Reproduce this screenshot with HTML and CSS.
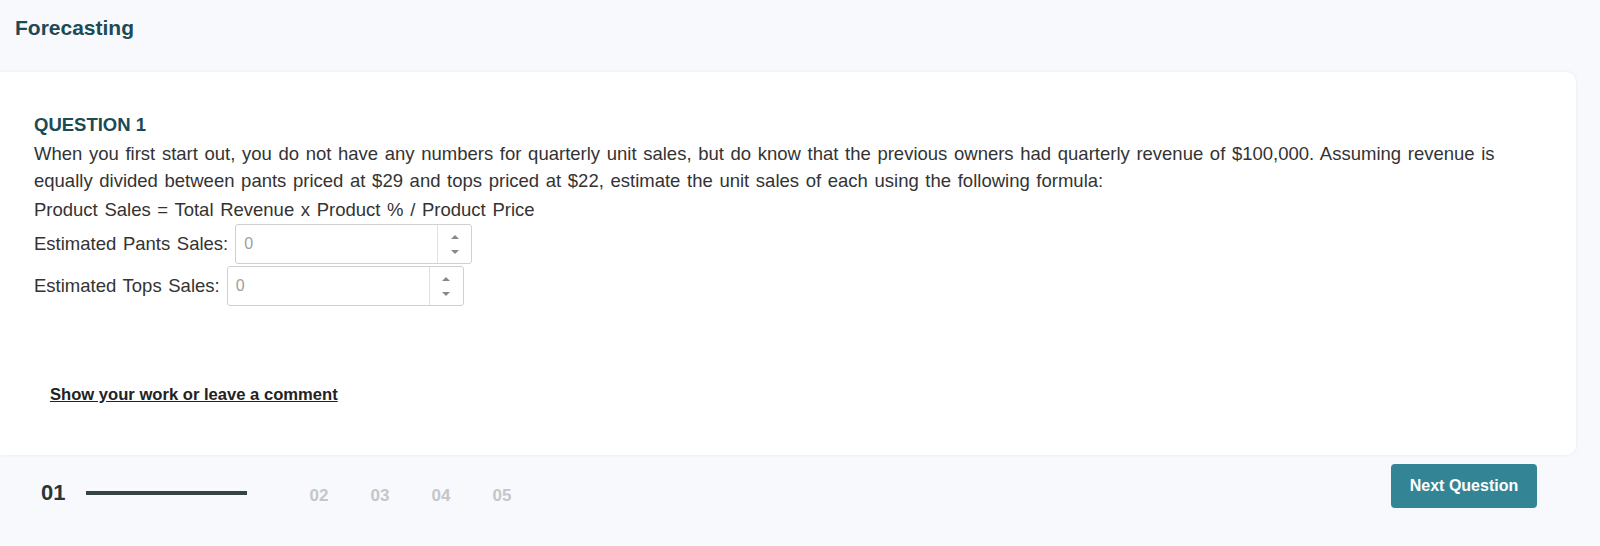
FILE: index.html
```html
<!DOCTYPE html>
<html>
<head>
<meta charset="utf-8">
<link rel="stylesheet" href="styles.css">
</head>
<body>
<header class="page-head">
  <h1 class="page-title">Forecasting</h1>
</header>
<main class="card">
  <h2 class="q-label">QUESTION 1</h2>
  <p class="q-text">When you first start out, you do not have any numbers for quarterly unit sales, but do know that the previous owners had quarterly revenue of $100,000. Assuming revenue is equally divided between pants priced at $29 and tops priced at $22, estimate the unit sales of each using the following formula:</p>
  <p class="q-formula">Product Sales = Total Revenue x Product % / Product Price</p>
  <div class="field">
    <label class="field-label">Estimated Pants Sales:</label>
    <div class="num-input"><span class="num-value">0</span><span class="spin"><span class="up"></span><span class="down"></span></span></div>
  </div>
  <div class="field">
    <label class="field-label">Estimated Tops Sales:</label>
    <div class="num-input"><span class="num-value">0</span><span class="spin"><span class="up"></span><span class="down"></span></span></div>
  </div>
  <a class="comment-link" href="#">Show your work or leave a comment</a>
</main>
<footer class="foot">
  <div class="steps">
    <span class="step current">01</span>
    <span class="progress"></span>
    <span class="step">02</span>
    <span class="step">03</span>
    <span class="step">04</span>
    <span class="step">05</span>
  </div>
  <button class="next-btn">Next Question</button>
</footer>
</body>
</html>
```
FILE: styles.css
```css
html, body {
  margin: 0;
  padding: 0;
  background: #f8f9fc;
  font-family: "Liberation Sans", Arial, sans-serif;
  color: #333;
}
.page-head {
  height: 72px;
  padding: 0 15px;
  box-sizing: border-box;
}
.page-title {
  margin: 0;
  padding-top: 16px;
  font-size: 21px;
  font-weight: bold;
  color: #1c4a55;
  line-height: 24px;
}
.card {
  width: 1576px;
  box-sizing: border-box;
  background: #fff;
  border-radius: 0 10px 10px 0;
  box-shadow: 0 0 4px rgba(0,0,0,0.06);
  padding: 42px 76px 50px 34px;
  display: flex;
  flex-direction: column;
  align-items: flex-start;
}
.q-label {
  margin: 0;
  font-size: 18.5px;
  line-height: 22px;
  font-weight: bold;
  color: #1c4a55;
}
.q-text {
  margin: 4px 0 0;
  font-size: 18.5px;
  line-height: 27px;
  word-spacing: 1.5px;
  color: #333;
}
.q-formula {
  margin: 2px 0 0;
  font-size: 18.5px;
  line-height: 27px;
  word-spacing: 1.5px;
}
.field {
  display: flex;
  align-items: center;
  gap: 7px;
  height: 40px;
  margin-top: 1px;
}
.field + .field { margin-top: 2px; }
.field-label {
  font-size: 18.5px;
  word-spacing: 1.5px;
}
.num-input {
  width: 237px;
  height: 40px;
  box-sizing: border-box;
  border: 1px solid #d0d0d0;
  border-radius: 3px;
  display: flex;
  align-items: stretch;
}
.num-value {
  flex: 1;
  display: flex;
  align-items: center;
  padding-left: 8px;
  color: #a0a0a0;
  font-size: 16px;
}
.spin {
  width: 33px;
  border-left: 1px solid #e0e0e0;
  display: flex;
  flex-direction: column;
  align-items: center;
  justify-content: center;
  gap: 11px;
}
.up, .down {
  width: 0;
  height: 0;
  border-left: 4px solid transparent;
  border-right: 4px solid transparent;
}
.up { border-bottom: 4px solid #888; }
.down { border-top: 4px solid #888; }
.comment-link {
  margin: 79px 0 0 16px;
  font-size: 16.6px;
  font-weight: bold;
  color: #222;
  text-decoration: underline;
  line-height: 20px;
}
.foot {
  width: 1576px;
  box-sizing: border-box;
  display: flex;
  justify-content: space-between;
  align-items: flex-start;
  padding: 9px 39px 0 41px;
}
.steps {
  display: flex;
  align-items: center;
  margin-top: 16px;
}
.step {
  font-size: 17px;
  font-weight: bold;
  color: #c4c7ca;
  width: 61px;
  padding-top: 6px;
  line-height: 20px;
}
.step.current {
  font-size: 22px;
  color: #2b3538;
  width: auto;
  padding-top: 0;
  line-height: 26px;
}
.progress {
  width: 161px;
  height: 4px;
  background: #384346;
  margin: 0 62px 0 21px;
}
.next-btn {
  width: 146px;
  height: 44px;
  background: #338596;
  color: #fff;
  border: none;
  border-radius: 4px;
  font-family: "Liberation Sans", Arial, sans-serif;
  font-size: 16px;
  font-weight: bold;
  padding: 0;
}
```
